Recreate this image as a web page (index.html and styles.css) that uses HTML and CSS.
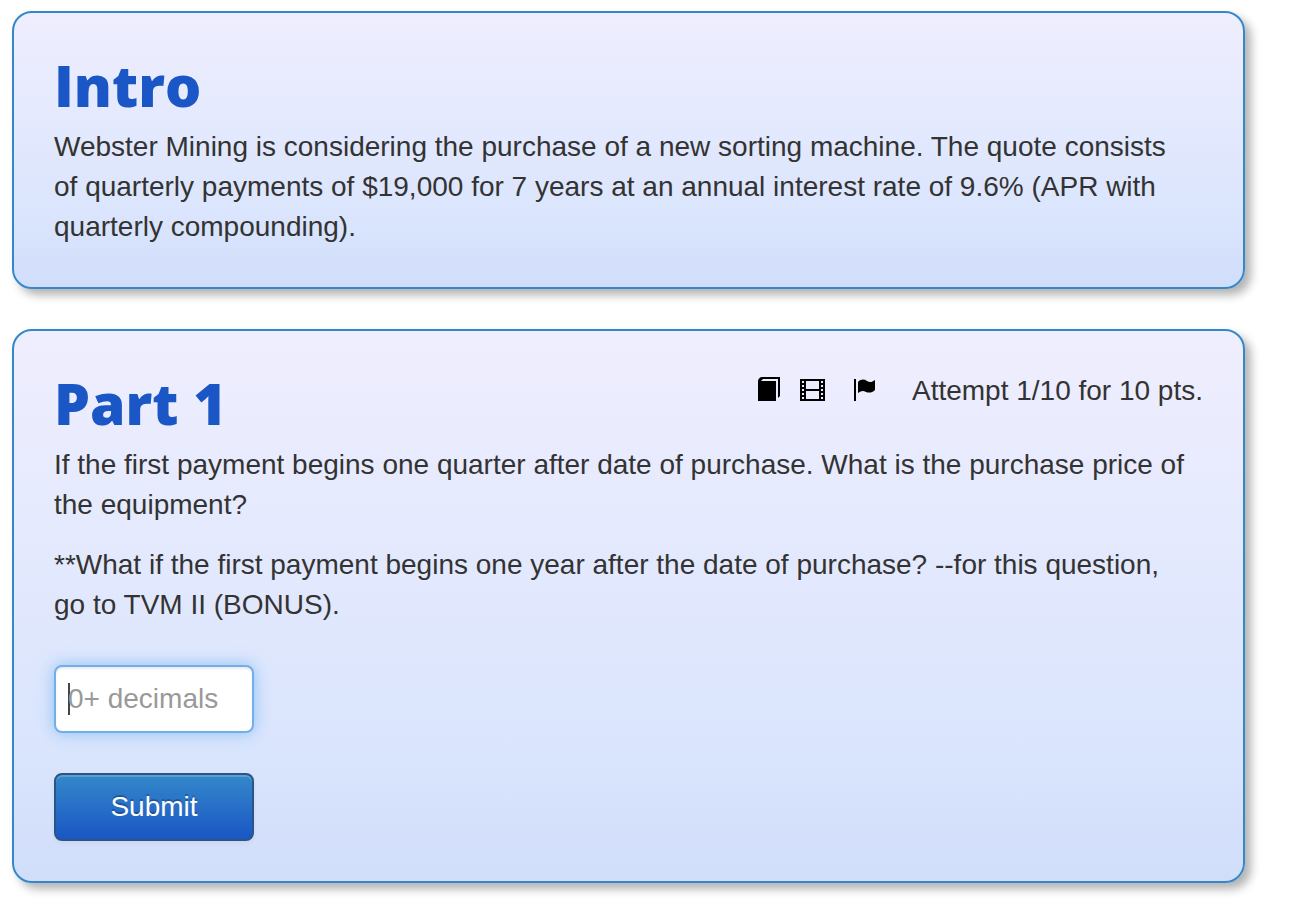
FILE: index.html
```
<!DOCTYPE html>
<html lang="en">
<head>
   <meta charset="UTF-8">
   <meta name="viewport" content="width=device-width, initial-scale=1">
   <link rel="stylesheet" href="styles.css">
   <title>Webster Mining</title>
</head>

<body>
   <section class="card">
      <h1>Intro</h1>
      <p>Webster Mining is considering the purchase of a new sorting machine. The quote consists<br> of quarterly payments of $19,000 for 7 years at an annual interest rate of 9.6% (APR with<br> quarterly compounding).</p>
   </section>

   <section class="card">
      <div class="top">
         <h1>Part 1</h1>

         <div class="tools">
            <button type="button" class="icon book" aria-label="Textbook">
               <svg width="24" height="24" viewBox="0 0 24 24">
                  <path d="M0 4C0 2 2 0 4 0H22V19L20 21V2H5L3 4H18V24H0Z"/>
               </svg>
            </button>
            <button type="button" class="icon film" aria-label="Video">
               <svg width="26" height="22" viewBox="0 0 26 22">
                  <path fill-rule="evenodd" d="M0 0H25V22H0ZM6 2V10H19V2ZM6 12V20H19V12ZM2 2V4H4V2ZM2 6V8H4V6ZM2 10V12H4V10ZM2 14V16H4V14ZM2 18V20H4V18ZM21 2V4H23V2ZM21 6V8H23V6ZM21 10V12H23V10ZM21 14V16H23V14ZM21 18V20H23V18Z"/>
               </svg>
            </button>
            <button type="button" class="icon flag" aria-label="Flag">
               <svg width="22" height="22" viewBox="0 0 22 22">
                  <path d="M0 0H2V22H0ZM4 3C7 0 10 0 13 2C16 4 18 3 21 1V11C18 14 15 14 12 13C9 11 7 12 4 14Z"/>
               </svg>
            </button>
            <span>Attempt 1/10 for 10 pts.</span>
         </div>
      </div>

      <p>If the first payment begins one quarter after date of purchase. What is the purchase price of<br> the equipment?</p>
      <p>**What if the first payment begins one year after the date of purchase? --for this question,<br> go to TVM II (BONUS).</p>

      <form>
         <input type="text" class="answer" placeholder="0+ decimals" aria-label="Answer">
         <button type="submit" class="submit">Submit</button>
      </form>
   </section>
</body>
</html>
```
FILE: styles.css
```
* {
   box-sizing:border-box;
}

body {
   margin:0;
   padding:11px 51px 0 12px;
   background:#fff;
   color:#333;
   font-family:"Liberation Sans", Arial, sans-serif;
   font-size:28px;
   line-height:40px;
}

.card {
   margin-bottom:40px;
   padding:40px;
   border:2px solid #3488ca;
   border-radius:20px;
   background:linear-gradient(#efeefe, #dae5fd 75%, #d1defa);
   box-shadow:6px 6px 10px rgba(0,0,0,.3);
}

.card:last-child {
   margin-bottom:39px;
}

h1 {
   margin:0;
   padding-bottom:10px;
   color:#1a56c5;
   font-family:"Open Sans", sans-serif;
   font-size:57px;
   font-weight:800;
   line-height:64px;
}

p {
   margin:0 0 20px;
}

p:last-child {
   margin-bottom:0;
}

.top {
   display:flex;
   justify-content:space-between;
}

.tools {
   display:flex;
   align-items:flex-end;
   height:40px;
}

.icon {
   display:flex;
   padding:0 0 10px;
   border:0;
   background:none;
   cursor:pointer;
}

.book {
   margin-right:18px;
}

.film {
   margin-right:28px;
}

.flag {
   margin-right:36px;
}

form {
   display:flex;
   flex-direction:column;
   align-items:flex-start;
   gap:40px;
   margin-top:40px;
}

.answer,
.submit {
   width:200px;
   height:68px;
   border-radius:8px;
   font:inherit;
}

.answer {
   padding:0 12px;
   border:2px solid #72aee8;
   background:#fff linear-gradient(#444, #444) 12px center / 2px 32px no-repeat;
   box-shadow:inset 0 2px 2px rgba(0,0,0,.08), 0 0 16px rgba(82,168,236,.6);
   outline:0;
}

.answer::placeholder {
   color:#999;
   opacity:1;
}

.submit {
   border:2px solid #2b5585;
   background:linear-gradient(#3488ca, #1a56c5);
   box-shadow:inset 0 2px 0 rgba(255,255,255,.2), 0 2px 4px rgba(0,0,0,.05);
   color:#fff;
   text-shadow:0 -2px 0 rgba(0,0,0,.25);
   cursor:pointer;
}
```
